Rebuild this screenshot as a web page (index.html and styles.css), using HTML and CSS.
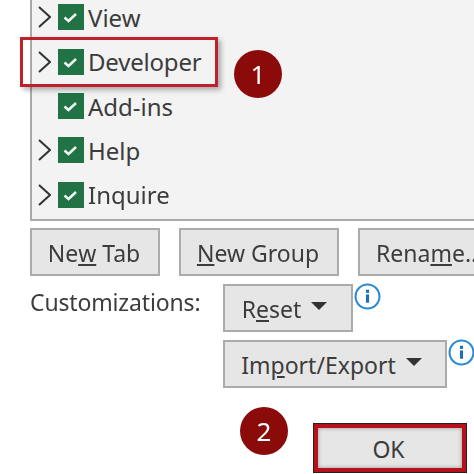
FILE: index.html
```html
<!DOCTYPE html>
<html lang="en">
<head>
    <meta charset="UTF-8">
    <title>Customize Ribbon</title>
    <link rel="stylesheet" href="styles.css">
</head>
<body>
    <div class="dialog">
        <div class="tab-list">
            <div class="tab-row">
                <svg class="chevron" viewBox="0 0 14 22"><path d="M2 1 L13 11 L2 21"/></svg>
                <svg class="check" viewBox="0 0 26 26"><rect width="26" height="26"/><path d="M6.500 13.500 L10.500 17 L18 10"/></svg>
                <span>View</span>
            </div>
            <div class="tab-row">
                <svg class="chevron" viewBox="0 0 14 22"><path d="M2 1 L13 11 L2 21"/></svg>
                <svg class="check" viewBox="0 0 26 26"><rect width="26" height="26"/><path d="M6.500 13.500 L10.500 17 L18 10"/></svg>
                <span class="tight">Developer</span>
            </div>
            <div class="tab-row no-chevron">
                <svg class="check" viewBox="0 0 26 26"><rect width="26" height="26"/><path d="M6.500 13.500 L10.500 17 L18 10"/></svg>
                <span>Add-ins</span>
            </div>
            <div class="tab-row">
                <svg class="chevron" viewBox="0 0 14 22"><path d="M2 1 L13 11 L2 21"/></svg>
                <svg class="check" viewBox="0 0 26 26"><rect width="26" height="26"/><path d="M6.500 13.500 L10.500 17 L18 10"/></svg>
                <span>Help</span>
            </div>
            <div class="tab-row">
                <svg class="chevron" viewBox="0 0 14 22"><path d="M2 1 L13 11 L2 21"/></svg>
                <svg class="check" viewBox="0 0 26 26"><rect width="26" height="26"/><path d="M6.500 13.500 L10.500 17 L18 10"/></svg>
                <span>Inquire</span>
            </div>
        </div>

        <div class="tab-buttons">
            <div class="btn new-tab">Ne<u>w</u> Tab</div>
            <div class="btn new-group"><u>N</u>ew Group</div>
            <div class="btn rename">Rena<u>m</u>e...</div>
        </div>

        <div class="customizations">
            <div class="custom-label">Customizations:</div>
            <div class="custom-actions">
                <div class="action-row">
                    <div class="btn reset">R<u>e</u>set <span class="caret"></span></div>
                    <svg class="info" viewBox="0 0 26 26"><circle cx="13" cy="13" r="11.500"/><rect x="11.500" y="11" width="3" height="8"/><rect x="11.500" y="6.500" width="3" height="3"/></svg>
                </div>
                <div class="action-row">
                    <div class="btn import-export">Im<u>p</u>ort/Export <span class="caret"></span></div>
                    <svg class="info" viewBox="0 0 26 26"><circle cx="13" cy="13" r="11.500"/><rect x="11.500" y="11" width="3" height="8"/><rect x="11.500" y="6.500" width="3" height="3"/></svg>
                </div>
            </div>
        </div>

        <div class="footer">
            <div class="btn ok">OK</div>
        </div>
    </div>

    <!-- annotations on top of the screenshot -->
    <div class="highlight"></div>
    <div class="badge badge-one">1</div>
    <div class="badge badge-two">2</div>
</body>
</html>
```

FILE: styles.css
```css
html, body {
    height: 100%;
}

body {
    margin: 0;
    background: #fff;
    color: #3c3c3c;
    font-family: "Noto Sans", "Open Sans", sans-serif;
    font-size: 24px;
    overflow: hidden;
    position: relative;
}

.dialog {
    width: 474px;
    height: 474px;
    padding-left: 30px;
    box-sizing: border-box;
    filter: blur(0.4px);
}

.tab-list {
    height: 221px;
    width: 470px;
    box-sizing: border-box;
    padding-bottom: 2px;
    background: #f3f3f3;
    border-left: 2px solid #a9a9a9;
    border-bottom: 2px solid #a9a9a9;
    display: flex;
    flex-direction: column;
    justify-content: flex-end;
}

.tab-row {
    height: 44.400px;
    flex-shrink: 0;
    display: flex;
    align-items: center;
    padding-left: 5px;
}

.no-chevron {
    padding-left: 26px;
}

.tight {
    letter-spacing: -0.200px;
}

.chevron {
    width: 14px;
    height: 22px;
    margin-right: 7px;
    fill: none;
    stroke: #333;
    stroke-width: 2;
}

.check {
    width: 26px;
    height: 26px;
    margin-right: 4px;
}

.check rect {
    fill: #217346;
}

.check path {
    fill: none;
    stroke: #eef7f1;
    stroke-width: 2.500;
}

.btn {
    box-sizing: border-box;
    height: 48px;
    padding-top: 2px;
    background: #e6e6e6;
    border: 2px solid #ababab;
    display: flex;
    align-items: center;
    justify-content: center;
    white-space: pre;
    flex-shrink: 0;
    font-size: 23px;
}

.tab-buttons {
    display: flex;
    gap: 19px;
    margin-top: 7px;
}

.new-tab {
    width: 130px;
    padding-right: 2px;
}

.new-group {
    width: 160px;
    padding-right: 2px;
}

.rename {
    width: 130px;
    padding-left: 16px;
    justify-content: flex-start;
}

.customizations {
    display: flex;
    margin-top: 8px;
}

.custom-label {
    width: 193px;
    flex-shrink: 0;
    line-height: 36px;
    font-size: 23px;
    letter-spacing: -0.150px;
}

.custom-actions {
    display: flex;
    flex-direction: column;
    gap: 8px;
}

.action-row {
    display: flex;
    align-items: flex-start;
}

.reset {
    width: 130px;
    padding-right: 7px;
}

.import-export {
    width: 224px;
    padding-right: 7px;
}

.caret {
    display: inline-block;
    width: 0;
    height: 0;
    margin: 0 0 6px 4px;
    border-left: 8px solid transparent;
    border-right: 8px solid transparent;
    border-top: 8px solid #333;
}

.info {
    width: 27px;
    height: 27px;
    flex-shrink: 0;
    margin: -1px 0 0 1px;
}

.info circle {
    fill: #fff;
    stroke: #2a8ad4;
    stroke-width: 2;
}

.info rect {
    fill: #1f6fb0;
}

.footer {
    display: flex;
    justify-content: flex-end;
    margin-top: 36px;
    padding-right: 8px;
}

.ok {
    width: 152px;
    padding-right: 3px;
    border: 4px solid #b5121b;
    outline: 1px solid #222;
    box-shadow: inset 0 0 4px rgba(0, 0, 0, 0.35);
}

.highlight {
    position: absolute;
    left: 20px;
    top: 37px;
    width: 198px;
    height: 50px;
    box-sizing: border-box;
    border: 3px solid #c0202a;
    box-shadow: 3px 3px 5px rgba(0, 0, 0, 0.3);
}

.badge {
    position: absolute;
    width: 48px;
    height: 48px;
    border-radius: 50%;
    background: #8b0a0a;
    color: #fff;
    font-size: 26px;
    display: flex;
    align-items: center;
    justify-content: center;
}

.badge-one {
    left: 234px;
    top: 50px;
}

.badge-two {
    left: 240px;
    top: 407px;
}
```
